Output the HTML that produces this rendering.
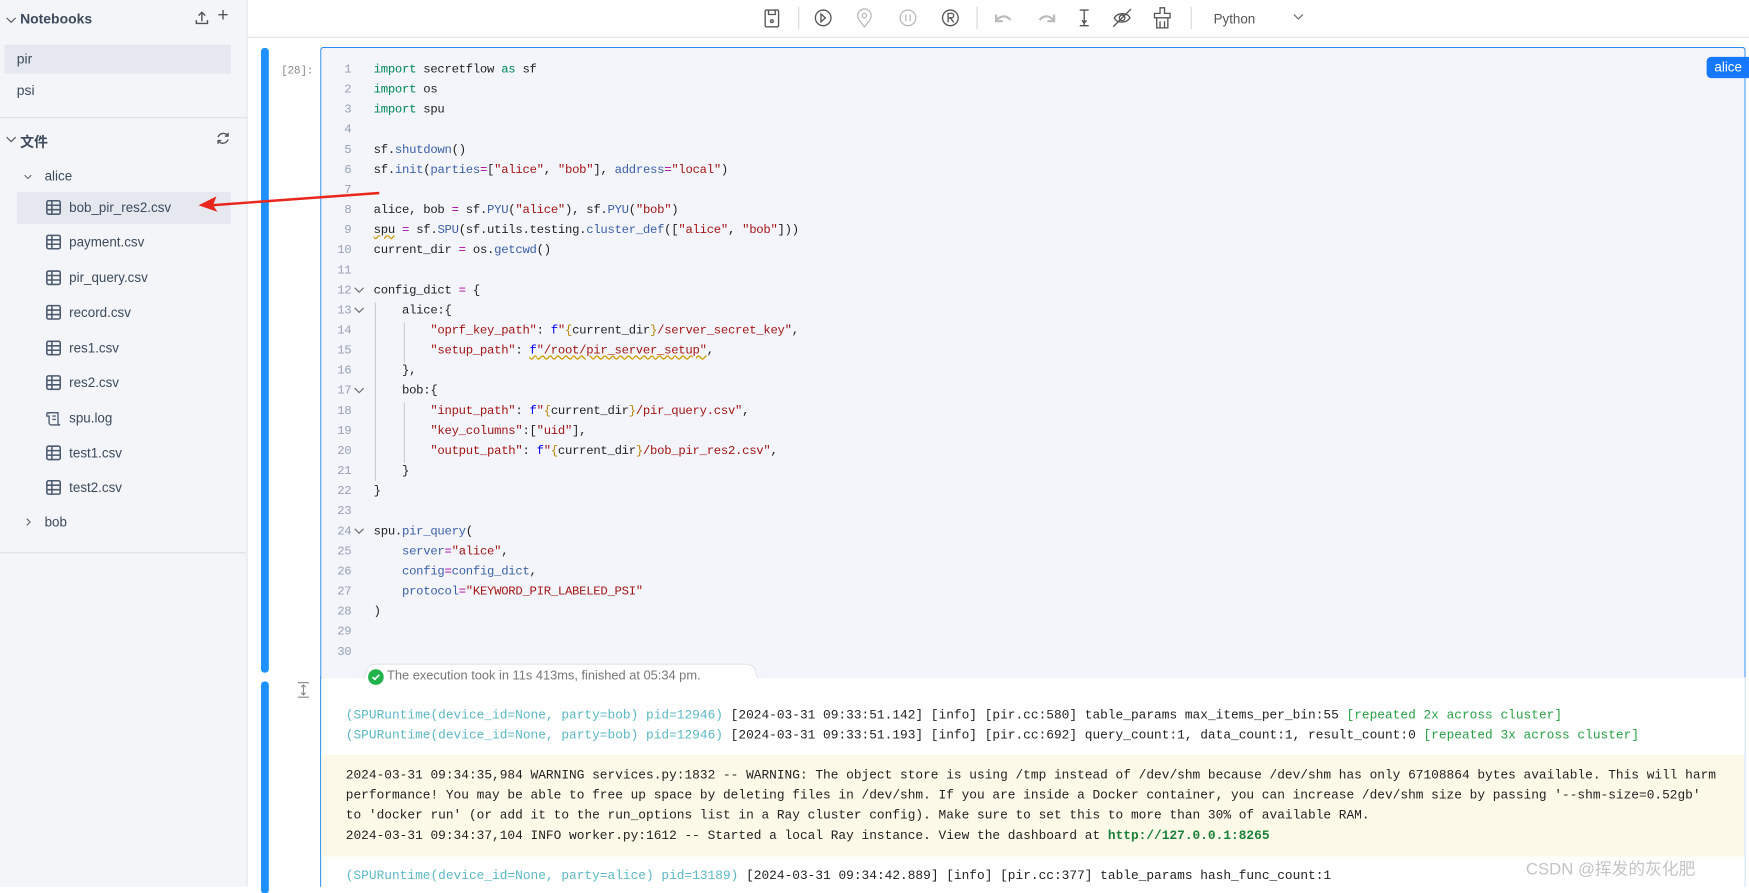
<!DOCTYPE html>
<html><head><meta charset="utf-8"><style>
*{margin:0;padding:0;box-sizing:border-box}
html,body{width:1749px;height:887px;overflow:hidden;background:#fff}
#w{position:absolute;left:0;top:0;width:1568px;height:795px;transform:scale(1.11543);transform-origin:0 0;font-family:"Liberation Sans","Noto Sans CJK SC",sans-serif;color:#333}
.a{position:absolute}
.sb{left:0;top:0;width:222px;height:795px;background:#f3f5f8;border-right:1px solid #e3e5e8}
.st{font-size:12px;color:#3c4a5c;white-space:nowrap}
.code{font-family:"Liberation Mono",monospace;font-size:11px;letter-spacing:-0.25px;white-space:pre;line-height:18px}
.ln{color:#98a2b3;text-align:right;width:26px}
.k{color:#008855}.s{color:#a31515}.f{color:#3e60a8}.p{color:#a0a}.b{color:#00f}.o{color:#b8860b}
.out{font-family:"Liberation Mono",monospace;font-size:11.5px;white-space:pre;line-height:18px;color:#222}
.c{color:#5cb8c4}.g{color:#2aa046}
.ic{stroke:#555;fill:none;stroke-width:1.2}
</style></head><body><div id="w">
<div class="a sb"></div>
<div class="a" style="left:0;top:105px;width:222px;height:1px;background:#dde0e4"></div>
<div class="a" style="left:0;top:495px;width:220px;height:1px;background:#dde0e4"></div>
<svg class="a" style="left:4px;top:12px" width="12" height="12"><path d="M2 4l4 4 4-4" stroke="#555" fill="none"/></svg>
<div class="a st" style="left:18px;top:10px;font-size:12.5px;font-weight:bold;color:#3c4a5c">Notebooks</div>
<svg class="a" style="left:174px;top:9px" width="14" height="14"><path d="M7 10V2M4 5l3-3 3 3M2 9v3h10V9" stroke="#555" fill="none" stroke-width="1.3"/></svg>
<div class="a" style="left:195px;top:4px;font-size:17px;color:#555">+</div>
<div class="a" style="left:4px;top:40px;width:203px;height:26px;background:#e5e9ef"></div>
<div class="a st" style="left:15px;top:46px;font-size:12.5px">pir</div>
<div class="a st" style="left:15px;top:74px;font-size:12.5px">psi</div>
<svg class="a" style="left:4px;top:119px" width="12" height="12"><path d="M2 4l4 4 4-4" stroke="#555" fill="none"/></svg>
<div class="a st" style="left:18px;top:117px;font-size:12.5px;font-weight:bold">文件</div>
<svg class="a" style="left:193px;top:117px" width="14" height="14"><path d="M11.5 5A5 5 0 0 0 2.5 6M2.5 9a5 5 0 0 0 9-1M11.5 2v3h-3M2.5 12V9h3" stroke="#555" fill="none" stroke-width="1.2"/></svg>
<svg class="a" style="left:20px;top:153px" width="10" height="10"><path d="M2 4l3 3 3-3" stroke="#666" fill="none"/></svg>
<div class="a st" style="left:40px;top:151px">alice</div>
<div class="a" style="left:15px;top:172px;width:192px;height:29px;background:#e5e9ef"></div>
<div id="files"></div>
<svg class="a" style="left:20px;top:463px" width="10" height="10"><path d="M4 2l3 3-3 3" stroke="#666" fill="none"/></svg>
<div class="a st" style="left:40px;top:461px">bob</div>

<!-- toolbar -->
<div class="a" style="left:223px;top:33px;width:1345px;height:1px;background:#e3e3e3"></div>
<svg class="a" style="left:680px;top:4px" width="500" height="26">
<g class="ic">
<rect x="6" y="5" width="12" height="15" rx="1"/><path d="M9 5v4h6V5"/><circle cx="12" cy="15" r="1.2"/>
<path d="M36 2v20" stroke="#ddd"/>
<circle cx="58" cy="12" r="7"/><path d="M56 8.5l4 3.5-4 3.5z"/>
<g stroke="#bbb"><path d="M95 20c-4-5-6-7-6-10a6 6 0 0 1 12 0c0 3-2 5-6 10z"/><circle cx="95" cy="10" r="2"/>
<circle cx="134" cy="12" r="7"/><path d="M132 9v6M136 9v6"/></g>
<circle cx="172" cy="12" r="7"/><path d="M170 16V8h3a2 2 0 0 1 0 4h-3M172 12l3 4"/>
<path d="M196 2v20" stroke="#ddd"/>
<path d="M213 9v6h6M213 15c3-5 9-6 13-1" stroke="#bbb" stroke-width="2"/>
<path d="M265 9v6h-6M265 15c-3-5-9-6-13-1" stroke="#bbb" stroke-width="2"/>
<path d="M288 5h8M288 19h8M292 5v14M290 14l2 3 2-3"/>
<path d="M319 12c3-5 12-5 14 0c-3 5-12 5-14 0zM318 20l16-16"/><circle cx="326" cy="12" r="2.5"/>
<path d="M360 3h4v5h5v4h-14v-4h5zM357 12v9h10v-9M360 15v6M364 15v6"/>
<path d="M388 2v20" stroke="#ddd"/>
<path d="M480 9l4 4 4-4" stroke="#777"/>
</g>
<text x="408" y="17" font-size="12" fill="#555" font-family="Liberation Sans">Python</text>
</svg>

<!-- cell -->
<div class="a" style="left:234px;top:43px;width:7px;height:560px;background:#1e90ff;border-radius:3px"></div>
<div class="a" style="left:234px;top:611px;width:7px;height:190px;background:#1e90ff;border-radius:3px"></div>
<div class="a" style="left:287px;top:42px;width:1278px;height:566px;background:#f3f5fa;border:1px solid #2a8cf0;border-bottom:none;border-radius:3px 3px 0 0"></div>
<div class="a" style="left:287px;top:607px;width:1px;height:188px;background:#2a8cf0"></div>
<div class="a" style="left:1564px;top:607px;width:1px;height:188px;background:#cfe3fb"></div>
<div class="a code" style="left:252px;top:56px;color:#888;font-size:10px">[28]:</div>
<div class="a" style="left:1530px;top:51px;width:40px;height:19px;background:#1677ff;border-radius:4px 0 0 4px;color:#fff;font-size:12px;line-height:19px;padding-left:7px">alice</div>
<div class="a code ln" style="left:289px;top:54px" id="lns"></div>
<div class="a code" style="left:335px;top:54px;color:#222"><span class="k">import</span> secretflow <span class="k">as</span> sf
<span class="k">import</span> os
<span class="k">import</span> spu

sf.<span class="f">shutdown</span>()
sf.<span class="f">init</span>(<span class="f">parties</span><span class="p">=</span>[<span class="s">"alice"</span>, <span class="s">"bob"</span>], <span class="f">address</span><span class="p">=</span><span class="s">"local"</span>)

alice, bob <span class="p">=</span> sf.<span class="f">PYU</span>(<span class="s">"alice"</span>), sf.<span class="f">PYU</span>(<span class="s">"bob"</span>)
<span style="text-decoration:underline wavy #c90">spu</span> <span class="p">=</span> sf.<span class="f">SPU</span>(sf.utils.testing.<span class="f">cluster_def</span>([<span class="s">"alice"</span>, <span class="s">"bob"</span>]))
current_dir <span class="p">=</span> os.<span class="f">getcwd</span>()

config_dict <span class="p">=</span> {
    alice:{
        <span class="s">"oprf_key_path"</span>: <span class="b">f</span><span class="s">"</span><span class="o">{</span>current_dir<span class="o">}</span><span class="s">/server_secret_key"</span>,
        <span class="s">"setup_path"</span>: <span style="text-decoration:underline wavy #c90"><span class="b">f</span><span class="s">"/root/pir_server_setup"</span></span>,
    },
    bob:{
        <span class="s">"input_path"</span>: <span class="b">f</span><span class="s">"</span><span class="o">{</span>current_dir<span class="o">}</span><span class="s">/pir_query.csv"</span>,
        <span class="s">"key_columns"</span>:[<span class="s">"uid"</span>],
        <span class="s">"output_path"</span>: <span class="b">f</span><span class="s">"</span><span class="o">{</span>current_dir<span class="o">}</span><span class="s">/bob_pir_res2.csv"</span>,
    }
}

spu.<span class="f">pir_query</span>(
    <span class="f">server</span><span class="p">=</span><span class="s">"alice"</span>,
    <span class="f">config</span><span class="p">=</span><span class="f">config_dict</span>,
    <span class="f">protocol</span><span class="p">=</span><span class="s">"KEYWORD_PIR_LABELED_PSI"</span>
)

</div>
<svg class="a" style="left:316px;top:255px" width="12" height="240"><g stroke="#666" fill="none"><path d="M2 3l4 4 4-4"/><path d="M2 21l4 4 4-4"/><path d="M2 93l4 4 4-4"/><path d="M2 219l4 4 4-4"/></g></svg>
<div class="a" style="left:336px;top:271px;width:1px;height:160px;background:#ccc"></div>
<div class="a" style="left:362px;top:289px;width:1px;height:36px;background:#ccc"></div>
<div class="a" style="left:362px;top:361px;width:1px;height:54px;background:#ccc"></div>

<!-- execution tab -->
<svg class="a" style="left:318px;top:593px" width="370" height="16"><path d="M0 15.5h6c2 0 3-1 4-4 1-6 3-9 10-9h330c7 0 9 3 10 9 1 3 2 4 4 4h6" fill="#fff" stroke="#e2e5ea"/></svg>
<div class="a" style="left:288px;top:608px;width:1276px;height:187px;background:#fff"></div>
<div class="a" style="left:330px;top:600px;width:14px;height:14px;border-radius:50%;background:#22b24c"></div>
<svg class="a" style="left:330px;top:600px" width="14" height="14"><path d="M4 7l2 2 4-4" stroke="#fff" fill="none" stroke-width="1.5"/></svg>
<div class="a" style="left:347px;top:600px;font-size:11.5px;color:#777;white-space:nowrap">The execution took in 11s 413ms, finished at 05:34 pm.</div>
<svg class="a" style="left:266px;top:611px" width="12" height="16"><path d="M1 1h10M1 14h10M6 3v9M4 5l2-2 2 2M4 10l2 2 2-2" stroke="#888" fill="none"/></svg>

<div class="a out" style="left:310px;top:633px"><span class="c">(SPURuntime(device_id=None, party=bob) pid=12946)</span> [2024-03-31 09:33:51.142] [info] [pir.cc:580] table_params max_items_per_bin:55 <span class="g">[repeated 2x across cluster]</span>
<span class="c">(SPURuntime(device_id=None, party=bob) pid=12946)</span> [2024-03-31 09:33:51.193] [info] [pir.cc:692] query_count:1, data_count:1, result_count:0 <span class="g">[repeated 3x across cluster]</span></div>
<div class="a" style="left:288px;top:677px;width:1276px;height:91px;background:#fdf9e8"></div>
<div class="a out" style="left:310px;top:687px">2024-03-31 09:34:35,984 WARNING services.py:1832 -- WARNING: The object store is using /tmp instead of /dev/shm because /dev/shm has only 67108864 bytes available. This will harm
performance! You may be able to free up space by deleting files in /dev/shm. If you are inside a Docker container, you can increase /dev/shm size by passing '--shm-size=0.52gb'
to 'docker run' (or add it to the run_options list in a Ray cluster config). Make sure to set this to more than 30% of available RAM.
2024-03-31 09:34:37,104 INFO worker.py:1612 -- Started a local Ray instance. View the dashboard at <b style="color:#1a7f37">http://127.0.0.1:8265</b></div>
<div class="a out" style="left:310px;top:777px"><span class="c">(SPURuntime(device_id=None, party=alice) pid=13189)</span> [2024-03-31 09:34:42.889] [info] [pir.cc:377] table_params hash_func_count:1</div>
<div class="a" style="left:1368px;top:768px;font-size:15px;color:#c4c4c4;white-space:nowrap">CSDN @挥发的灰化肥</div>

<!-- red arrow -->
<svg class="a" style="left:170px;top:165px" width="180" height="30"><path d="M170 8L20 19" stroke="#e8261c" stroke-width="2.2"/><path d="M8 19l16-8-3 8 4 6z" fill="#e8261c"/></svg>
</div>
<script>
var f=[["bob_pir_res2.csv",186],["payment.csv",217],["pir_query.csv",249],["record.csv",280],["res1.csv",312],["res2.csv",343],["spu.log",375,1],["test1.csv",406],["test2.csv",437]],h="";
f.forEach(function(x){var y=x[1];
h+=x[2]?'<svg class="a" style="left:41px;top:'+(y-7)+'px" width="14" height="14"><path d="M3 2h8v9a2 2 0 0 0 2 2H5a2 2 0 0 1-2-2V5H1V3a1 1 0 0 1 2 0M6 5h3M6 8h3" stroke="#4c5a6e" fill="none" stroke-width="1.2"/></svg>'
:'<svg class="a" style="left:41px;top:'+(y-7)+'px" width="14" height="14"><rect x="1" y="1" width="12" height="12" rx="1.5" stroke="#4c5a6e" fill="none" stroke-width="1.4"/><path d="M1 5h12M1 9h12M5.5 1v12" stroke="#4c5a6e" stroke-width="1.4"/></svg>';
h+='<div class="a st" style="left:62px;top:'+(y-7)+'px">'+x[0]+'</div>';});
document.getElementById('files').innerHTML=h;
var l="";for(var i=1;i<=30;i++)l+=i+"\n";document.getElementById('lns').textContent=l;
</script>
</body></html>
